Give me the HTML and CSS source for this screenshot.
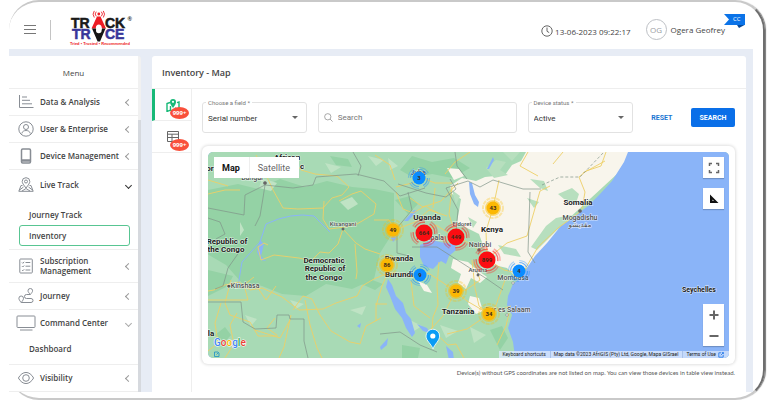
FILE: index.html
```html
<!DOCTYPE html>
<html lang="en">
<head>
<meta charset="utf-8">
<meta name="viewport" content="width=device-width, initial-scale=1">
<title>Inventory - Map</title>
<link rel="stylesheet" href="styles.css">
</head>
<body>
<div class="frame">
  <header class="topbar">
    <button class="burger" type="button" aria-label="Toggle menu"><span></span><span></span><span></span></button>
    <svg class="logo" viewBox="68 10 68 38" role="img" aria-label="Track Trace">
      <g class="logo-word">
        <text x="71" y="29">TR</text><text x="105" y="29">CK</text>
        <text x="72" y="39.500" class="blue">TR</text><text x="105" y="39.500" class="blue">CE</text>
      </g>
      <path d="M97 17.500h3.500l5.500 12h-4l-1-2.500h-4.500l-1 2.500h-4z" fill="#ed1c24"/>
      <circle cx="98.800" cy="28" r="2.600" fill="#fff"/>
      <path d="M92 29.500h4a3 2 0 0 0 6 0h3.500l-5.500 13h-2.400z" fill="#151515"/>
      <circle cx="98.800" cy="31.500" r="2.800" fill="#fff"/>
      <circle cx="98.800" cy="15" r="1.400" fill="#ed1c24"/>
      <path d="M96.300 17.300a3.200 3.200 0 0 1 0-4.600M101.300 12.700a3.200 3.200 0 0 1 0 4.600M94.300 18.500a5.500 5.500 0 0 1 0-6.600M103.300 11.900a5.500 5.500 0 0 1 0 6.600" fill="none" stroke="#ed1c24" stroke-width=".9"/>
      <text x="127.500" y="21.500" class="reg">®</text>
      <text x="70" y="45.800" class="tagline">Tried • Trusted • Recommended</text>
    </svg>
    <div class="clock">
      <svg viewBox="0 0 12 12"><circle cx="6" cy="6" r="5.200"/><path d="M6 2.500V6.300L8.200 7.600"/></svg>
      <time>13-06-2023 09:22:17</time>
    </div>
    <div class="user"><span class="avatar">OG</span><span>Ogera Geofrey</span></div>
    <div class="ribbon"><svg viewBox="0 0 22 14"><path d="M13 11h7.500l-5.500 3z" fill="#064a9c"/><path d="M0 0h21v11H0l5-5.500z" fill="#0b73e8"/></svg><span>CC</span></div>
  </header>

  <div class="workspace">
    <nav class="sidebar" aria-label="Menu">
      <h2>Menu</h2>
      <ul class="menu">
        <li><a href="#"><svg viewBox="0 0 16 16"><path d="M1.500 1v12.500H15.500M4 3h5M4 6.300h8M4 9.800h10"/></svg><span>Data &amp; Analysis</span><i class="chev"></i></a></li>
        <li><a href="#"><svg viewBox="0 0 16 16"><circle cx="8" cy="8" r="7.200"/><circle cx="8" cy="6" r="2.500"/><path d="M3.800 12.500c.5-4 8-4 8.500 0"/></svg><span>User &amp; Enterprise</span><i class="chev"></i></a></li>
        <li><a href="#"><svg viewBox="0 0 16 16"><rect x="3.500" y="1" width="9" height="14" rx="1.200" stroke-width="1.500"/><path d="M3.500 12.500h9" stroke-width="2.500"/></svg><span>Device Management</span><i class="chev"></i></a></li>
        <li class="open live"><a href="#"><svg viewBox="0 0 16 16"><path d="M8 11C5.500 7.800 4.200 6 4.200 4.500a3.800 3.800 0 0 1 7.600 0C11.800 6 10.500 7.800 8 11zM4.500 8.500H3L.8 14.300h14.400L13 8.500h-1.500M1.500 13l4-3M14.500 13l-4-3M4 14l4-2.500 4 2.500"/><circle cx="8" cy="4.500" r="1.500"/></svg><span>Live Track</span><i class="chev down"></i></a>
          <ul><li><a href="#">Journey Track</a></li><li><a href="#" class="current" aria-current="page">Inventory</a></li></ul></li>
        <li class="tall"><a href="#"><svg viewBox="0 0 16 16"><rect x="1.800" y="1" width="12.500" height="14" rx=".8"/><path d="M4 4.500l.8.8 1.400-1.500M4 8.200l.8.800 1.400-1.500M4 12l.8.800 1.400-1.500M7.500 4.500h4.800M7.500 8.200h4.800M7.500 12h4.800"/></svg><span>Subscription Management</span><i class="chev"></i></a></li>
        <li><a href="#"><svg viewBox="0 0 16 16"><path d="M3.200 14.500C1.700 12.700.9 11.500.9 10.300a2.300 2.300 0 0 1 4.600 0c0 1.200-.8 2.400-2.300 4.200zM12.300 6.500C10.800 4.700 10 3.800 10 2.800a2.300 2.300 0 0 1 4.600 0c0 1-.8 1.900-2.300 3.700zM12.300 6.500H8.500a2 2 0 0 0 0 4H13a2 2 0 0 1 0 4H3.200"/></svg><span>Journey</span><i class="chev"></i></a></li>
        <li class="open command"><a href="#"><svg class="wide" viewBox="0 0 20 16"><rect x="1" y="1" width="18" height="11.500" rx=".8"/><path d="M4 15h12.500"/></svg><span>Command Center</span><i class="chev down faint"></i></a>
          <ul><li><a href="#">Dashboard</a></li></ul></li>
        <li><a href="#"><svg viewBox="0 0 16 16"><path d="M.4 8C4.500.6 11.500.6 15.600 8 11.500 15.400 4.500 15.400.4 8z"/><circle cx="8" cy="8" r="3.300"/></svg><span>Visibility</span><i class="chev"></i></a></li>
      </ul>
    </nav>

    <main class="panel">
      <h1>Inventory - Map</h1>
      <div class="panel-body">
        <div class="tabs">
          <button type="button" class="tab active" aria-label="Map view"><svg viewBox="0 0 14 14"><path d="M4 4.500L1 5.500v8l3.500-1.300 5 1.300 3.500-1.300V4l-2 .6M4.500 8v4M9.500 9.500v4" fill="none" stroke="#17b978" stroke-width="1.400"/><path d="M7 10C4.800 7 4 5.600 4 4a3 3 0 0 1 6 0c0 1.600-.8 3-3 6z" fill="#17b978"/><circle cx="7" cy="3.800" r="1.100" fill="#fff"/></svg><span class="count">999+</span></button>
          <button type="button" class="tab" aria-label="Table view"><svg viewBox="0 0 14 14"><path d="M1.500 1.500h11v10h-11zM1.500 4.200h11M1.500 7.500h11M6 4.200v7.300" fill="none" stroke="#666" stroke-width="1"/></svg><span class="count">999+</span></button>
        </div>
        <div class="content">
          <form class="filters">
            <div class="field"><label for="field">Choose a field *</label><select id="field"><option>Serial number</option></select></div>
            <div class="field search"><svg viewBox="0 0 10 10"><circle cx="4.200" cy="4.200" r="3.500"/><path d="M6.700 6.700L9.500 9.500"/></svg><input type="search" placeholder="Search" aria-label="Search"></div>
            <div class="field"><label for="status">Device status *</label><select id="status"><option>Active</option></select></div>
            <button type="reset" class="reset">RESET</button>
            <button type="button" class="submit">SEARCH</button>
          </form>
          <section class="map-card">
            <div class="map">
              <svg class="map-art" viewBox="208 152 521 206" preserveAspectRatio="xMidYMid slice" role="img" aria-label="Map of East Africa">
                <defs>
                  <g id="yc"><circle r="10" fill="none" stroke="#fbbc04" stroke-opacity=".3" stroke-width="2" stroke-dasharray="4 1"/><circle r="8" fill="#fbbc04" fill-opacity=".5"/><circle r="6.500" fill="#fbb804"/></g>
                  <g id="bc"><circle r="10.500" fill="none" stroke="#1a8cff" stroke-opacity=".35" stroke-width="1.200" stroke-dasharray="11 5.500"/><circle r="8.500" fill="none" stroke="#1a8cff" stroke-opacity=".6" stroke-width="1.200" stroke-dasharray="9 4.350"/><circle r="6.500" fill="#0a8cff"/></g>
                  <g id="rc"><circle r="13" fill="none" stroke="#f22" stroke-opacity=".35" stroke-width="1.400" stroke-dasharray="14 6.420" transform="rotate(30)"/><circle r="10.800" fill="none" stroke="#f22" stroke-opacity=".6" stroke-width="1.400" stroke-dasharray="12 4.960" transform="rotate(30)"/><circle r="8.500" fill="#fb0d12"/></g>
                </defs>
                <path fill="#a8dab5" d="M0 0h900v500H0z"/>
                <g fill="#94d2a5">
                  <path d="M208 190l30-6 20 5 22-10 25 8 22-6 25 6 22 2 20 4v38l-14 22-6 26-22 10-26-5-20 12-24-2-20-8-20-3-16-18-38-22z"/>
                  <path d="M208 270l25 6-5 10-20 10zM330 156l18 3 4 8-16-2zM357 282l10-4 16 6-8 6zM215 335l10-8 6 8-8 9zM395 200l15-4 8 8-10 10zM490 330l12-4 6 12-8 12zM402 345l18 3-2 10h-16z"/>
                  <path d="M412 156l20 6 22-4 16 10-18 10-20-4-18 4-14-8z"/>
                </g>
                <g fill="#bfe3c4">
                  <path d="M262 178l15 5-6 8-12-3zM325 163l16 4-10 6zM340 202l12-5 6 7-10 6zM245 315l12 4-6 7zM290 300l14 4-8 5zM368 156l16 4-8 6zM440 325l18 6-12 7zM240 222l4 8-4 6zM388 158l10 8-8 4zM350 310l16-4-4 9zM410 320l12 6-8 5zM470 327l16 8-12 8z"/>
                </g>
                <g fill="#f8f5ec">
                  <path d="M526 152l-5 9-9 4-7 10-20 2-9 4-14-3-12 8 2 8 9 5-2 12-2 11 10 6 12 6 5 14 12 8 12 7 17 6 10-7 12-18 12-12 6-10 26-24 26-24 20-30 4-12z"/>
                  <path d="M497 250l14 6 11 13-5 9-10-10-13-3zM453 259l15 3 9 8 10 7-7 6-9-5-5 11-8-6 3-9-10-6zM470 296l9 2 4 13-7 3-8-10zM418 281l9 4 5 8-8-2zM447 168l12 1 5 7-10 4z"/>
                </g>
                <path fill="#b7dfbe" d="M486 168l10-8 10 2-6 8 8 5-14 3zM503 152h17l-8 9zM530 179l14 2 4 10-8-3zM527 198l12 4-5 6zM558 194l14-6 7 6-3 9-12-4zM546 226l10-8 15-3 4 3-18 12-20 20-6-3zM452 190l8 6-4 9zM468 217l9 5-4 6zM498 245l18 4 5 8-17-3z"/>
                <g fill="#8ab4f8">
                  <path d="M628 152l-4 10-12 19-12 13-12 12-13 10-15 11-13 16-12 13-8 12-4 8-10 8-5 12-1 9 5 10-4 13 5 14 2 15v40h400V100H640z"/>
                  <path d="M420 245l11-5 14 3 10 1 1 6-7 6-3 8-5-3-8 8-9-3-4-9zM469 182l3 1 3 12 4 7-1 5-4-3-4-10zM404 221l10-11 3 1-9 10zM388 279l4 6 4 11 7 7 3 10 5 6 4 14-3 4-6-9-4-10-7-9-5-13-4-9zM417 324l10 4 3 5-7-2zM446 346l7 6 1 8h-5zM380 347l8-9-1 7-6 5zM391 238l4-6 1 7-3 3zM487 169l6-12 1 3-5 9zM260 240l4 4-3 12 5 5-5-1-4-8zM357 326l4-3-1 5z"/>
                </g>
                <path d="M238 286l4-24 18-20 6-18q25-12 48-8l16 16" fill="none" stroke="#8ab4f8" stroke-width="1"/>
                <g class="roads">
                  <path d="M208 194l17-4 15 0M256 155l10 20 7 15 10 18 15 1 25-1 9-10 10-3 7-8-12-11-22-2-14-4-8-10-7-3M339 201l13-7 9-3 15 13-2 10-17 10-12 3-16 2-6-10 1-18M374 220h15l6 10M343 229l-5 15-9 9-9-1-9 9-12-3-25-3-13 5-3-13 6-4 4 2M343 229l13 14 9 6 15 5M355 244l2 28-1 7M388 273l-14 6-12 7-5 10-21 7-13 6-24 1-17-13-20-9-12 2-11-8-14 3-11 5-12 2M256 285l10 15 10-14M293 310l10-14 9 3 8 16 11 16 19 11 10 2 6-18 15-8M305 300l5 25 7 23 5 10M231 280l-6 23 5 12 20 7 8 14 20 0M208 300h40l-4-15 10-8M221 303l-6 20 3 20-10 8M237 313l-7 12 4 19-9 14M291 315l-7 32-5 11M255 330l25 8 10-18M277 335l-10-7 8-10"/>
                  <path d="M375 155l15 10 5 15M208 180l20 6M396 187l16-4 8-6 15 6 17 0M396 192l7 17 10 4 12-7 13 7M395 230l20-8 14-12 18 6M424 233l12-8 14 9 8 3 16 9 13 13M410 198l13 9 18-6 17-18M433 208l2-20M452 186l-3 28 7 23M487 259l-1-28 7-23 6-28M487 259l20-16 20-7 13-45 10-5M487 259l17 11 14 3M474 262l6 18-14 10-10 2-14-10-14-9-8 6-15-5-14-1M439 262l-2 23 1 20-5 12-2 26M455 292l-12 24-12 13 17 16 8-1 8 14M411 281l3 25 16 12M489 314l-22-13-11-9M489 314l-22 15-20 5M511 306l-22 8M472 260l3 28 4 18 10 8M505 280l-10 28-6 6M497 345l9-19 3-13M386 277l-4 9-6 20v15M375 304h12"/>
                  <path d="M606 152l-5 14-15 5-7 6 6 15-3 17M583 173l22-12M580 212l-22 16-20 19-14 24M528 152l-8 14 18 10M553 164l10-12M470 152l-15 10-10 12"/>
                </g>
                <g class="borders">
                  <path d="M208 208l36 7 1-20 20-10-2 13-3 18-5 10M265 185l28 3 20-3 3-8 40-3 28 7 16 15 25-8M208 302h33l2 20 12 7 21-1 1-13 12 0 1 4h14l0 22 4 17M353 152l8 14-3 10M242 248l-14 20-5 18-8 3M398 184l28 9 20 4 10-8-6-10M408 192l4 18-15 18v25l12 3M446 188l12 22-2 22M412 247h25l50 32 16 11M446 188l22-7 12 6 13-7 30 9h18M530 192l-2 60 7 11M455 152l2 14 10 13M380 334l20-2 20 13 17 7M208 218l12 4 5 12-9 5"/>
                </g>
                <path d="M542 185l18-8 20 0 24-25" class="borders" stroke-dasharray="3 2"/>
                <g class="dots"><circle cx="265" cy="183" r="1.600"/><circle cx="343" cy="229" r="1.200"/><circle cx="513" cy="283" r="1.200" fill="#fff"/><circle cx="507" cy="315" r="1.200" fill="#fff"/><circle cx="580" cy="211" r="1.600"/><circle cx="479" cy="250" r="1.400"/><circle cx="478" cy="275" r="1.200"/></g>
                <g class="country">
                  <text x="287" y="160">African</text><text x="302" y="169">c</text>
                  <text x="210" y="171">or</text>
                  <text x="227" y="244">Republic of</text><text x="226" y="252">the Congo</text>
                  <text x="324" y="263">Democratic</text><text x="325" y="271">Republic of</text><text x="324" y="280">the Congo</text>
                  <text x="427" y="220">Uganda</text><text x="492" y="232">Kenya</text><text x="399" y="261">Rwanda</text><text x="399" y="277">Burundi</text>
                  <text x="458" y="314">Tanzania</text><text x="578" y="205">Somalia</text><text x="211" y="336">la</text>
                </g>
                <g class="city">
                  <text x="252" y="180">Bangui</text><text x="243" y="288">●Kinshasa</text><text x="418" y="175">Juba</text><text x="430" y="240">Kampala</text><text x="480" y="247">Nairobi</text><text x="513" y="280">Mombasa</text><text x="508" y="312">Dar es Salaam</text><text x="580" y="220">Mogadishu</text><text x="580" y="227" class="arabic">مقديشو</text>
                </g>
                <g class="city small"><text x="343" y="226">Kisangani</text><text x="462" y="226">Eldoret</text><text x="478" y="272">Arusha</text></g>
                <g class="city island"><text x="699" y="292">Seychelles</text></g>
                <g><use href="#yc" x="493" y="208"/><use href="#yc" x="393" y="230"/><use href="#yc" x="387" y="265"/><use href="#yc" x="456" y="291"/><use href="#yc" x="489" y="314"/><use href="#bc" x="419" y="178"/><use href="#bc" x="420" y="275"/><use href="#bc" x="519" y="271"/><use href="#rc" x="424" y="233"/><use href="#rc" x="456" y="237"/><use href="#rc" x="487" y="260"/></g>
                <g class="cluster-label"><text x="493" y="210">43</text><text x="393" y="232">49</text><text x="387" y="267">86</text><text x="456" y="293">39</text><text x="489" y="316">34</text><text x="419" y="180">3</text><text x="420" y="277">9</text><text x="519" y="273">4</text><text x="424" y="235">664</text><text x="456" y="239">449</text><text x="487" y="262">899</text></g>
                <path d="M433 349c-1.500-5-7-8-7-13a6.800 6.800 0 0 1 13.600 0c0 5-5.100 8-6.600 13z" fill="#0a9cf5" stroke="#fff" stroke-width=".8"/><circle cx="432.800" cy="336" r="2.600" fill="#fff"/>
                <text x="214" y="346" class="brand"><tspan fill="#4285f4">G</tspan><tspan fill="#ea4335">o</tspan><tspan fill="#fbbc04">o</tspan><tspan fill="#4285f4">g</tspan><tspan fill="#34a853">l</tspan><tspan fill="#ea4335">e</tspan></text>
                <path d="M218 352h-3.500v4.500h4.500V353M216.500 354.500l2.500-2.500" fill="none" stroke="#1a8fc8" stroke-width=".8"/>
              </svg>
              <div class="map-type"><button type="button" class="on">Map</button><button type="button">Satellite</button></div>
              <div class="map-tools">
                <button type="button" aria-label="Full screen"><svg viewBox="0 0 12 12"><path d="M1.500 4V1.500H4M8 1.500h2.500V4M10.500 8v2.500H8M4 10.500H1.500V8" fill="none" stroke="#666" stroke-width="1.500"/></svg></button>
                <button type="button" aria-label="Measure"><svg viewBox="0 0 12 12"><path d="M2 1.500L10.500 10H2zM4.500 6.500v1.500H6z" fill="#111" fill-rule="evenodd"/></svg></button>
              </div>
              <div class="map-zoom"><button type="button" aria-label="Zoom in"><svg viewBox="0 0 12 12"><path d="M1.500 6h9M6 1.500v9"/></svg></button><button type="button" aria-label="Zoom out"><svg viewBox="0 0 12 12"><path d="M1.500 6h9"/></svg></button></div>
              <div class="credits"><button type="button">Keyboard shortcuts</button><span>Map data ©2023 AfriGIS (Pty) Ltd, Google, Mapa GISrael</span><a href="#">Terms of Use <svg viewBox="0 0 6 6"><path d="M3 .8H.8v4.400h4.400V3M2.800 3.200L5.400.6M3.800.6h1.600v1.600"/></svg></a></div>
            </div>
          </section>
          <p class="note">Device(s) without GPS coordinates are not listed on map. You can view those devices in table view instead.</p>
        </div>
      </div>
    </main>
  </div>
</div>
</body>
</html>
```
FILE: styles.css
```css
* { box-sizing: border-box; }
body { margin: 0; background: #fff; color: #444; font: 8px/10px "Open Sans", "Noto Sans", sans-serif; }
button, input, select { font: inherit; color: inherit; border: 0; background: none; padding: 0; margin: 0; }
a { color: inherit; text-decoration: none; }
ul { list-style: none; margin: 0; padding: 0; }
svg { display: block; }

.frame { height: 100vh; min-height: 400px; display: flex; flex-direction: column; padding: 0 10px 6px 0; margin: 0 3px 0 9px; border: solid #c9c9c9; border-width: 2px 2px 2px 0; border-right-color: #6e6e6e; border-radius: 30px; box-shadow: 2px 0 1px -1px #777; }

.topbar { height: 47px; flex: none; display: flex; align-items: center; position: relative; padding: 8px 28px 0 15px; }
.burger { width: 27px; height: 20px; display: flex; flex-direction: column; justify-content: center; gap: 3px; border-right: 1px solid #c4c4c4; }
.burger span { width: 12px; height: 1px; background: #777; }
.logo { width: 68px; height: 38px; margin: -3px auto 0 17px; }
.logo-word { font: 700 14px "Liberation Sans", sans-serif; fill: #1a1a1a; stroke: #1a1a1a; stroke-width: .5; }
.logo-word .blue { fill: #39369a; stroke: #39369a; }
.reg { font: 700 6px "Liberation Sans", sans-serif; fill: #222; }
.tagline { font: 700 4px "Liberation Sans", sans-serif; fill: #ed1c24; }
.clock { display: flex; align-items: center; gap: 2px; padding-top: 3px; margin-right: 15px; }
.clock svg { width: 12px; height: 12px; fill: none; stroke: #666; }
.clock time { font-size: 8px; padding-top: 2px; }
.user { display: flex; align-items: center; gap: 4px; }
.avatar { width: 21px; height: 21px; border: 1px solid #bdc0c5; border-radius: 50%; color: #9a9da3; display: grid; place-items: center; }
.ribbon { position: absolute; right: 7px; top: 12px; width: 22px; height: 14px; }
.ribbon svg { position: absolute; inset: 0; }
.ribbon span { position: absolute; left: 9px; top: 0; color: #fff; font-size: 6px; }

.workspace { flex: 1; min-height: 0; display: grid; grid-template-columns: 132px 1fr; gap: 11px; padding: 7px 7px 0 0; background: #e7ecf5; }
.sidebar { background: linear-gradient(#f1f1f1 64px, #d6d9de 64px) right / 3px 100% no-repeat #fff; border-radius: 0 3px 0 0; padding-right: 3px; }
.sidebar h2 { margin: 0; height: 33px; line-height: 33px; font-size: 8px; font-weight: 400; text-align: center; border-bottom: 1px solid #eee; background: #fff; }
.menu > li { border-bottom: 1px solid #eee; font-weight: 600; }
.menu > li > a { display: grid; grid-template-columns: 19px 1fr 6px; align-items: center; column-gap: 5px; height: 26px; padding: 0 6px 0 7px; }
.menu svg { width: 16px; height: 16px; justify-self: center; fill: none; stroke: #888d94; stroke-width: 1; }
.menu svg.wide { width: 20px; }
.menu .live > a { height: 30px; }
.menu .tall > a { height: 32px; }
.menu .live { padding-bottom: 3px; }
.menu .command > a { height: 26px; }
.menu .command > ul { padding-bottom: 2px; }
.menu > li > a > span { white-space: nowrap; }
.menu .tall > a > span { white-space: normal; }
.chev { width: 5px; height: 5px; border: solid #999; border-width: 0 0 1px 1px; transform: rotate(45deg); }
.chev.down { transform: rotate(-45deg); border-color: #333; }
.chev.down.faint { border-color: #aaa; }
.menu li li { margin: 0 8px 0 10px; }
.menu li li a { display: flex; align-items: center; height: 21px; padding: 0 9px; border: 1px solid transparent; border-radius: 3px; }
.menu .command li a { height: 26px; }
.menu li li a.current { border-color: #58c592; }
.live > ul { padding-top: 4px; }

.panel { background: #fff; border-radius: 3px 3px 0 0; display: flex; flex-direction: column; min-width: 0; }
.panel h1 { margin: 0; height: 33px; line-height: 33px; padding-left: 10px; font-size: 9px; font-weight: 600; border-bottom: 1px solid #eee; flex: none; }
.panel-body { flex: 1; display: flex; min-height: 0; }
.tabs { width: 40px; border-right: 1px solid #eee; }
.tab { position: relative; display: block; width: 100%; height: 32px; padding-left: 14px; border-bottom: 1px solid #eee; }
.tab.active { border-left: 3px solid #17b978; padding-left: 11px; }
.tab svg { width: 14px; height: 14px; }
.count { position: absolute; left: 18px; top: 18px; width: 19px; height: 12px; border-radius: 50%; background: #f9503b; color: #fff; font: 700 6px/12px "Open Sans", sans-serif; text-align: center; }
.active .count { left: 15px; }
.content { flex: 1; min-width: 0; display: flex; flex-direction: column; padding: 13px 11px 0 10px; }

.filters { display: grid; grid-template-columns: 105px 199px 105px 37px 44px; justify-content: space-between; align-items: center; font-family: Roboto, sans-serif; flex: none; }
.field { position: relative; height: 31px; border: 1px solid #e2e2e2; border-radius: 3px; }
.field label { position: absolute; z-index: 1; left: 3px; top: -4px; padding: 0 2px; background: #fff; font-size: 6px; line-height: 8px; color: #777; }
.field select { appearance: none; width: 100%; height: 100%; padding: 3px 5px 0; font-size: 8px; color: #333; }
.field:has(select)::after { content: ""; position: absolute; right: 8px; top: 13px; border: 3px solid transparent; border-top-color: #666; border-bottom: 0; }
.search { display: flex; align-items: center; gap: 5px; padding: 0 5px; }
.search svg { width: 9px; height: 9px; fill: none; stroke: #888; stroke-width: .8; }
.search input { flex: 1; min-width: 0; font-size: 8px; outline: 0; }
.search input::placeholder { color: #777; opacity: 1; }
.reset { color: #1976d2; font-size: 7px; font-weight: 700; height: 19px; }
.submit { background: #0a6fe8; color: #fff; font-size: 7px; font-weight: 700; height: 19px; border-radius: 2px; }

.map-card { flex: 1; min-height: 0; margin-top: 13px; padding: 6px; border-radius: 6px; box-shadow: 0 0 3px 1px #e1e1e1; }
.map { position: relative; height: 100%; overflow: hidden; border-radius: 5px; background: #8ab4f8; }
.map-art { width: 100%; height: 100%; }
.map-art text { font-family: Roboto, sans-serif; }
.roads { fill: none; stroke: #edcf66; stroke-width: .9; stroke-linejoin: round; }
.borders { fill: none; stroke: #809488; stroke-width: .7; }
.dots { fill: #666; stroke: #666; stroke-width: .5; }
.country, .city { text-anchor: middle; paint-order: stroke; stroke: #fff; stroke-opacity: .65; stroke-width: 1.2; }
.country { font-size: 8px; font-weight: 700; fill: #222; }
.city { font-size: 7px; font-weight: 500; fill: #505050; }
.city.small { font-size: 6px; }
.city.island { font-size: 7px; font-weight: 700; fill: #222; }
.map-art .arabic { font: 7px "DejaVu Sans", sans-serif; }
.cluster-label { font-size: 6px; font-weight: 700; fill: #402a1a; text-anchor: middle; }
.map-art .brand { font: 500 10px Roboto, sans-serif; paint-order: stroke; stroke: #fff; stroke-width: 1; }
.map-type { position: absolute; left: 6px; top: 5px; display: flex; background: #fff; font: 9px Roboto, sans-serif; color: #666; }
.map-type button { height: 21px; padding: 0 9px 0 8px; }
.map-type .on { color: #111; font-weight: 700; border-right: 1px solid #eee; }
.map-tools { position: absolute; right: 5px; top: 5px; display: grid; gap: 10px; }
.map-tools button, .map-zoom button { width: 21px; height: 21px; background: #fff; display: grid; place-items: center; box-shadow: 0 1px 1px #0003; }
.map-tools svg, .map-zoom svg { width: 12px; height: 12px; }
.map-zoom { position: absolute; right: 5px; bottom: 12px; }
.map-zoom svg { stroke: #666; stroke-width: 2; }
.credits { position: absolute; right: 0; bottom: 0; display: flex; font: 5px/7px Roboto, sans-serif; color: #222; white-space: nowrap; }
.credits > * { display: flex; align-items: center; gap: 2px; padding: 0 4px 0 3px; background: #dce8fccc; border-right: 1px solid #a9c2ea; }
.credits > :last-child { border-right: 0; background: #c4d9fb; padding-right: 5px; }
.credits svg { width: 6px; height: 6px; fill: none; stroke: #1a73e8; stroke-width: .8; }
.note { flex: none; margin: 0; padding: 4px 0 14px; text-align: right; font: 6px/10px Lato, sans-serif; color: #555; white-space: nowrap; }
```
